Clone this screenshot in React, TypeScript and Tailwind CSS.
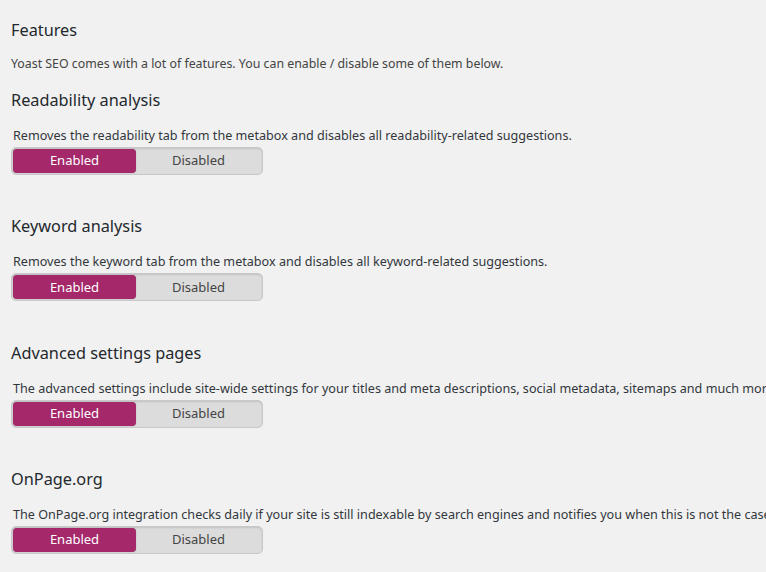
import React from 'react';

interface Feature {
  title: string;
  description: string;
}

const features: Feature[] = [
  {
    title: 'Readability analysis',
    description: 'Removes the readability tab from the metabox and disables all readability-related suggestions.',
  },
  {
    title: 'Keyword analysis',
    description: 'Removes the keyword tab from the metabox and disables all keyword-related suggestions.',
  },
  {
    title: 'Advanced settings pages',
    description:
      'The advanced settings include site-wide settings for your titles and meta descriptions, social metadata, sitemaps and much more.',
  },
  {
    title: 'OnPage.org',
    description:
      'The OnPage.org integration checks daily if your site is still indexable by search engines and notifies you when this is not the case.',
  },
];

const Toggle: React.FC = () => (
  <div className="flex w-[252px] h-[28px] p-[1px] rounded-[5px] border border-[#c8c8c8] bg-[#dcdcdc] shadow-[inset_0_1px_2px_rgba(0,0,0,0.12)]">
    <div className="flex items-center justify-center w-[123px] h-full rounded-[4px] bg-[#a4286a] text-white text-[13px] shadow-[0_0_1px_rgba(0,0,0,0.4)]">
      Enabled
    </div>
    <div className="flex flex-1 items-center justify-center text-[#444] text-[13px]">Disabled</div>
  </div>
);

export default function App() {
  return (
    <div
      className="w-[766px] h-[572px] overflow-hidden bg-[#f1f1f1] pl-[11px] pt-[20px]"
      style={{ fontFamily: '"Noto Sans", "Open Sans", sans-serif' }}
    >
      <h1 className="text-[16.3px] leading-[20px] text-[#23282d]">Features</h1>
      <p className="mt-[15px] text-[12.35px] leading-[18px] text-[#444] whitespace-nowrap">
        Yoast SEO comes with a lot of features. You can enable / disable some of them below.
      </p>
      {features.map((f, i) => (
        <div key={f.title} className={i === 0 ? 'mt-[17px]' : 'mt-[41.4px]'}>
          <h2 className="text-[16.3px] leading-[20px] text-[#23282d] whitespace-nowrap">{f.title}</h2>
          <p className="mt-[17px] ml-[2px] text-[12.6px] leading-[18px] text-[#32373c] whitespace-nowrap">
            {f.description}
          </p>
          <div className="mt-[2px]">
            <Toggle />
          </div>
        </div>
      ))}
    </div>
  );
}
